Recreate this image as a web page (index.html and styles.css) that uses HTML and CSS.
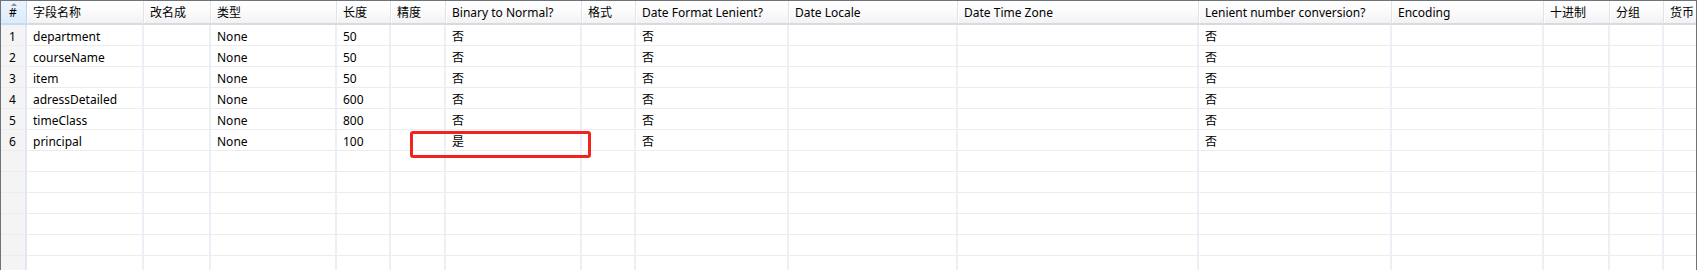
FILE: index.html
```html
<!DOCTYPE html>
<html lang="zh-CN">
<head>
<meta charset="utf-8">
<title>字段</title>
<link rel="stylesheet" href="styles.css">
</head>
<body>
<div class="grid">
  <div class="row head">
    <div class="cell num sel"><span class="sort"></span>#</div>
    <div class="cell">字段名称</div>
    <div class="cell">改名成</div>
    <div class="cell">类型</div>
    <div class="cell">长度</div>
    <div class="cell">精度</div>
    <div class="cell">Binary to Normal?</div>
    <div class="cell">格式</div>
    <div class="cell">Date Format Lenient?</div>
    <div class="cell">Date Locale</div>
    <div class="cell">Date Time Zone</div>
    <div class="cell">Lenient number conversion?</div>
    <div class="cell">Encoding</div>
    <div class="cell">十进制</div>
    <div class="cell">分组</div>
    <div class="cell last">货币</div>
  </div>
  <div class="row"><div class="cell num">1</div><div class="cell">department</div><div class="cell"></div><div class="cell">None</div><div class="cell">50</div><div class="cell"></div><div class="cell">否</div><div class="cell"></div><div class="cell">否</div><div class="cell"></div><div class="cell"></div><div class="cell">否</div><div class="cell"></div><div class="cell"></div><div class="cell"></div><div class="cell last"></div></div>
  <div class="row"><div class="cell num">2</div><div class="cell">courseName</div><div class="cell"></div><div class="cell">None</div><div class="cell">50</div><div class="cell"></div><div class="cell">否</div><div class="cell"></div><div class="cell">否</div><div class="cell"></div><div class="cell"></div><div class="cell">否</div><div class="cell"></div><div class="cell"></div><div class="cell"></div><div class="cell last"></div></div>
  <div class="row"><div class="cell num">3</div><div class="cell">item</div><div class="cell"></div><div class="cell">None</div><div class="cell">50</div><div class="cell"></div><div class="cell">否</div><div class="cell"></div><div class="cell">否</div><div class="cell"></div><div class="cell"></div><div class="cell">否</div><div class="cell"></div><div class="cell"></div><div class="cell"></div><div class="cell last"></div></div>
  <div class="row"><div class="cell num">4</div><div class="cell">adressDetailed</div><div class="cell"></div><div class="cell">None</div><div class="cell">600</div><div class="cell"></div><div class="cell">否</div><div class="cell"></div><div class="cell">否</div><div class="cell"></div><div class="cell"></div><div class="cell">否</div><div class="cell"></div><div class="cell"></div><div class="cell"></div><div class="cell last"></div></div>
  <div class="row"><div class="cell num">5</div><div class="cell">timeClass</div><div class="cell"></div><div class="cell">None</div><div class="cell">800</div><div class="cell"></div><div class="cell">否</div><div class="cell"></div><div class="cell">否</div><div class="cell"></div><div class="cell"></div><div class="cell">否</div><div class="cell"></div><div class="cell"></div><div class="cell"></div><div class="cell last"></div></div>
  <div class="row"><div class="cell num">6</div><div class="cell">principal</div><div class="cell"></div><div class="cell">None</div><div class="cell">100</div><div class="cell"></div><div class="cell">是</div><div class="cell"></div><div class="cell">否</div><div class="cell"></div><div class="cell"></div><div class="cell">否</div><div class="cell"></div><div class="cell"></div><div class="cell"></div><div class="cell last"></div></div>
  <div class="row"><div class="cell num"></div><div class="cell"></div><div class="cell"></div><div class="cell"></div><div class="cell"></div><div class="cell"></div><div class="cell"></div><div class="cell"></div><div class="cell"></div><div class="cell"></div><div class="cell"></div><div class="cell"></div><div class="cell"></div><div class="cell"></div><div class="cell"></div><div class="cell last"></div></div>
  <div class="row"><div class="cell num"></div><div class="cell"></div><div class="cell"></div><div class="cell"></div><div class="cell"></div><div class="cell"></div><div class="cell"></div><div class="cell"></div><div class="cell"></div><div class="cell"></div><div class="cell"></div><div class="cell"></div><div class="cell"></div><div class="cell"></div><div class="cell"></div><div class="cell last"></div></div>
  <div class="row"><div class="cell num"></div><div class="cell"></div><div class="cell"></div><div class="cell"></div><div class="cell"></div><div class="cell"></div><div class="cell"></div><div class="cell"></div><div class="cell"></div><div class="cell"></div><div class="cell"></div><div class="cell"></div><div class="cell"></div><div class="cell"></div><div class="cell"></div><div class="cell last"></div></div>
  <div class="row"><div class="cell num"></div><div class="cell"></div><div class="cell"></div><div class="cell"></div><div class="cell"></div><div class="cell"></div><div class="cell"></div><div class="cell"></div><div class="cell"></div><div class="cell"></div><div class="cell"></div><div class="cell"></div><div class="cell"></div><div class="cell"></div><div class="cell"></div><div class="cell last"></div></div>
  <div class="row"><div class="cell num"></div><div class="cell"></div><div class="cell"></div><div class="cell"></div><div class="cell"></div><div class="cell"></div><div class="cell"></div><div class="cell"></div><div class="cell"></div><div class="cell"></div><div class="cell"></div><div class="cell"></div><div class="cell"></div><div class="cell"></div><div class="cell"></div><div class="cell last"></div></div>
  <div class="row"><div class="cell num"></div><div class="cell"></div><div class="cell"></div><div class="cell"></div><div class="cell"></div><div class="cell"></div><div class="cell"></div><div class="cell"></div><div class="cell"></div><div class="cell"></div><div class="cell"></div><div class="cell"></div><div class="cell"></div><div class="cell"></div><div class="cell"></div><div class="cell last"></div></div>
  <div class="highlight"></div>
</div>
</body>
</html>
```

FILE: styles.css
```css
html, body {
  margin: 0;
  padding: 0;
  background: #ffffff;
}

.grid {
  position: relative;
  width: 1697px;
  height: 270px;
  box-sizing: border-box;
  border-top: 1px solid #6e737a;
  border-left: 1px solid #6e737a;
  border-right: 1px solid #6e737a;
  overflow: hidden;
  font-family: "Noto Sans", "Noto Sans CJK SC", sans-serif;
  font-size: 12px;
  color: #000;
}

.row {
  display: grid;
  grid-template-columns: 26px 117px 67px 126px 54px 55px 136px 54px 153px 169px 241px 193px 152px 66px 54px 32px;
  height: 21px;
}

.cell {
  box-sizing: border-box;
  height: 21px;
  line-height: 19px;
  padding-top: 2px;
  padding-left: 6px;
  border-right: 2px solid #ebf0f7;
  border-bottom: 1px solid #ececec;
  white-space: nowrap;
  overflow: hidden;
}

.cell.last {
  border-right: none;
}

.cell.num {
  background: #f4f4f4;
  padding-left: 8px;
  border-right: 2px solid #dfe8f4;
  border-bottom-color: #ececec;
}

.head {
  height: 24px;
  background: linear-gradient(#ffffff 0%, #fbfbfc 45%, #f0f1f3 100%);
}

.head .cell {
  height: 24px;
  line-height: 23px;
  padding-top: 0;
  padding-left: 6px;
  border-right: 1px solid #e2e3e6;
  border-bottom: 2px solid #d9dadd;
  box-shadow: inset 1px 0 0 #ffffff;
}

.head .cell.num.sel {
  position: relative;
  padding-left: 8px;
  background: linear-gradient(#eaf4fd 0%, #dcecfb 100%);
  border-right: 1px solid #b8d6f2;
  border-bottom: 2px solid #c8dcf0;
  box-shadow: none;
}

.sort {
  position: absolute;
  left: 10px;
  top: 2px;
  width: 0;
  height: 0;
  border-left: 3px solid transparent;
  border-right: 3px solid transparent;
  border-bottom: 3px solid #8a9099;
}

.head .cell.last {
  border-right: none;
}

.highlight {
  position: absolute;
  left: 409px;
  top: 130px;
  width: 181px;
  height: 27px;
  box-sizing: border-box;
  border: 3px solid #f2231c;
  border-radius: 3px;
}
```
